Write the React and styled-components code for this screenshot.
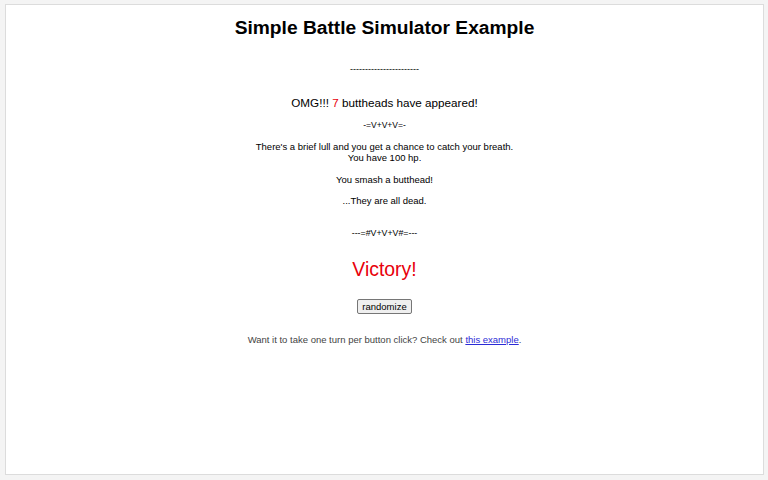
import React from "react";
import styled, { createGlobalStyle } from "styled-components";

const Global = createGlobalStyle`
  html, body { margin: 0; padding: 0; }
  body {
    background: #f4f4f4;
    font-family: "Liberation Sans", Arial, sans-serif;
    color: #000;
  }
`;

const Page = styled.div`
  padding: 4px 4px 5px 5px;
  height: 480px;
  box-sizing: border-box;
  display: flex;
`;

const Card = styled.main`
  flex: 1;
  background: #fff;
  border: 1px solid #dcdcdc;
  text-align: center;
  padding-top: 11px;
`;

const Title = styled.h1`
  margin: 0 0 24px;
  font-size: 19.2px;
  font-weight: bold;
  line-height: 24px;
`;

const Line = styled.div`
  font-size: ${(p) => p.$size || 9.5}px;
  line-height: ${(p) => p.$lh || 11}px;
  color: ${(p) => p.$color || "#000"};
  margin-top: ${(p) => p.$mt || 0}px;
`;

const Red = styled.span`
  color: #e8000b;
`;

const Button = styled.button`
  font-family: "Liberation Sans", Arial, sans-serif;
  font-size: 9.5px;
  padding: 1px 4px;
  margin-top: 18px;
  background: #efefef;
  border: 1px solid #767676;
  border-radius: 2px;
`;

const Footer = styled.p`
  margin: 20px 0 0;
  font-size: 9.5px;
  line-height: 12px;
  color: #444;
  a { color: #2b2bd6; }
`;

export default function App() {
  return (
    <>
      <Global />
      <Page>
        <Card>
          <Title>Simple Battle Simulator Example</Title>
          <Line $size={9}>-----------------------</Line>
          <Line $size={11.7} $lh={15} $mt={20}>
            OMG!!! <Red>7</Red> buttheads have appeared!
          </Line>
          <Line $size={8.5} $mt={10}>-=V+V+V=-</Line>
          <Line $mt={10}>
            There's a brief lull and you get a chance to catch your breath.
            <br />
            You have 100 hp.
          </Line>
          <Line $mt={11}>You smash a butthead!</Line>
          <Line $mt={10}>...They are all dead.</Line>
          <Line $size={8.8} $mt={22}>---=#V+V+V#=---</Line>
          <Line $size={19.4} $lh={24} $mt={18} $color="#e8000b">Victory!</Line>
          <Button>randomize</Button>
          <Footer>
            Want it to take one turn per button click? Check out{" "}
            <a href="#">this example</a>.
          </Footer>
        </Card>
      </Page>
    </>
  );
}
